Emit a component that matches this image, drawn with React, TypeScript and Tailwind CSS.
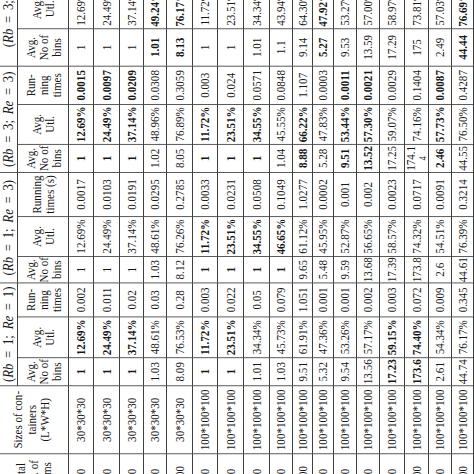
import React from "react";

// "!" marks a bold (best) value
type Row = string[];

const rows: Row[] = [
  ["10", "30*30*30", "!1", "!12.69%", "0.002", "1", "12.69%", "0.0017", "!1", "!12.69%", "!0.0015", "1", "12.69%", "0.0014"],
  ["20", "30*30*30", "!1", "!24.49%", "0.011", "1", "24.49%", "0.0103", "!1", "!24.49%", "!0.0097", "1", "24.49%", "0.0099"],
  ["30", "30*30*30", "!1", "!37.14%", "0.02", "1", "37.14%", "0.0191", "!1", "!37.14%", "!0.0209", "1", "37.14%", "0.0211"],
  ["40", "30*30*30", "1.03", "48.61%", "0.03", "1.03", "48.61%", "0.0295", "1.02", "48.96%", "0.0308", "!1.01", "!49.24%", "0.0312"],
  ["100", "30*30*30", "8.09", "76.53%", "0.28", "8.12", "76.26%", "0.2785", "8.05", "76.89%", "0.3059", "!8.13", "!76.17%", "0.3101"],
  ["10", "100*100*100", "!1", "!11.72%", "0.003", "!1", "!11.72%", "0.0033", "!1", "!11.72%", "0.003", "1", "11.72%", "0.0031"],
  ["20", "100*100*100", "!1", "!23.51%", "0.022", "!1", "!23.51%", "0.0231", "!1", "!23.51%", "0.024", "1", "23.51%", "0.0244"],
  ["30", "100*100*100", "1.01", "34.34%", "0.05", "!1", "!34.55%", "0.0508", "!1", "!34.55%", "0.0571", "1.01", "34.34%", "0.0569"],
  ["40", "100*100*100", "1.03", "45.73%", "0.079", "!1", "!46.65%", "0.1049", "1.04", "45.55%", "0.0848", "1.1", "43.94%", "0.0851"],
  ["100", "100*100*100", "9.51", "61.91%", "1.051", "9.65", "61.12%", "1.0277", "!8.88", "!66.22%", "1.107", "9.14", "64.30%", "1.112"],
  ["50", "100*100*100", "5.32", "47.36%", "0.001", "5.48", "45.95%", "0.0002", "5.28", "47.83%", "0.0003", "!5.27", "!47.92%", "0.0003"],
  ["90", "100*100*100", "9.54", "53.26%", "0.001", "9.59", "52.87%", "0.001", "!9.51", "!53.44%", "!0.0011", "9.53", "53.27%", "0.0012"],
  ["60", "100*100*100", "13.56", "57.17%", "0.002", "13.68", "56.65%", "0.002", "!13.52", "!57.30%", "!0.0021", "13.59", "57.00%", "0.0022"],
  ["70", "100*100*100", "!17.23", "!59.15%", "0.003", "17.39", "58.57%", "0.0023", "17.25", "59.07%", "0.0029", "17.29", "58.97%", "0.0030"],
  ["900", "100*100*100", "!173.6", "!74.40%", "0.072", "173.8", "74.32%", "0.0717", "174.1|4", "74.16%", "0.1404", "175", "73.81%", "0.1411"],
  ["20", "100*100*100", "2.61", "54.34%", "0.009", "2.6", "54.51%", "0.0091", "!2.46", "!57.73%", "!0.0087", "2.49", "57.03%", "0.0089"],
  ["300", "100*100*100", "44.74", "76.17%", "0.345", "44.61", "76.39%", "0.3214", "44.55", "76.50%", "0.4287", "!44.44", "!76.69%", "0.4301"],
];

const rowH = [
  "h-[25px]", "h-[26px]", "h-[24px]", "h-[23px]", "h-[26px]", "h-[25px]", "h-[26px]", "h-[26px]", "h-[23px]",
  "h-[20px]", "h-[21px]", "h-[23px]", "h-[23px]", "h-[25px]", "h-[24px]", "h-[23px]", "h-[22px]",
];

const cols = [
  "w-[48px]", "w-[80px]", "w-[33px]", "w-[48px]", "w-[40px]", "w-[31px]", "w-[47px]", "w-[52px]",
  "w-[33px]", "w-[47px]", "w-[45px]", "w-[44px]", "w-[47px]", "w-[66px]",
];

const cell = "border border-[#3f3f3f] p-0 text-center align-middle whitespace-nowrap";

function Value({ v }: { v: string }) {
  const bold = v.startsWith("!");
  const text = bold ? v.slice(1) : v;
  if (text.includes("|")) {
    const [a, b] = text.split("|");
    return (
      <span className="block leading-[11px]">
        {a}
        <br />
        <span className="text-[10px]">{b}</span>
      </span>
    );
  }
  return <span className={bold ? "font-bold" : ""}>{text}</span>;
}

function Group({ rb, re }: { rb: number; re: number }) {
  return (
    <th colSpan={3} className={cell + " font-normal text-[15px] leading-[16px] [word-spacing:3px]"}>
      (<i>Rb</i> = {rb}; <i>Re</i> = {re})
    </th>
  );
}

function Sub({ lines }: { lines: string[] }) {
  return (
    <th className={cell + " font-normal leading-[13px]"}>
      {lines.map((l, i) => (
        <React.Fragment key={i}>
          {i > 0 && <br />}
          {l}
        </React.Fragment>
      ))}
    </th>
  );
}

export default function App() {
  return (
    <div className="w-[474px] h-[474px] overflow-hidden bg-white">
      <div className="w-[661px] origin-top-left -rotate-90 scale-x-[0.85] translate-x-[-2px] translate-y-[495px]">
        <table
          className="w-[661px] table-fixed border-collapse text-[13px] leading-[14px] text-[#161616]"
          style={{ fontFamily: '"Liberation Serif", "Times New Roman", serif' }}
        >
          <colgroup>
            {cols.map((c, i) => (
              <col key={i} className={c} />
            ))}
          </colgroup>
          <thead>
            <tr className="h-[19px]">
              <th rowSpan={2} className={cell + " font-normal leading-[13px]"}>
                Total
                <br />
                No. of
                <br />
                items
              </th>
              <th rowSpan={2} className={cell + " font-normal leading-[13.5px] pb-[4px]"}>
                Sizes of con-
                <br />
                tainers
                <br />
                (L*W*H)
              </th>
              <Group rb={1} re={1} />
              <Group rb={1} re={3} />
              <Group rb={3} re={3} />
              <Group rb={3} re={5} />
            </tr>
            <tr className="h-[51px]">
              <Sub lines={["Avg.", "No of", "bins"]} />
              <Sub lines={["Avg.", "Utl."]} />
              <Sub lines={["Run-", "ning", "times"]} />
              <Sub lines={["Avg.", "No of", "bins"]} />
              <Sub lines={["Avg.", "Utl."]} />
              <Sub lines={["Running", "times (s)"]} />
              <Sub lines={["Avg.", "No of", "bins"]} />
              <Sub lines={["Avg.", "Utl."]} />
              <Sub lines={["Run-", "ning", "times"]} />
              <Sub lines={["Avg.", "No of", "bins"]} />
              <Sub lines={["Avg.", "Utl."]} />
              <Sub lines={["Run-", "ning", "times"]} />
            </tr>
          </thead>
          <tbody>
            {rows.map((r, i) => (
              <tr key={i} className={rowH[i]}>
                {r.map((v, j) => (
                  <td key={j} className={cell}>
                    <Value v={v} />
                  </td>
                ))}
              </tr>
            ))}
          </tbody>
        </table>
      </div>
    </div>
  );
}
